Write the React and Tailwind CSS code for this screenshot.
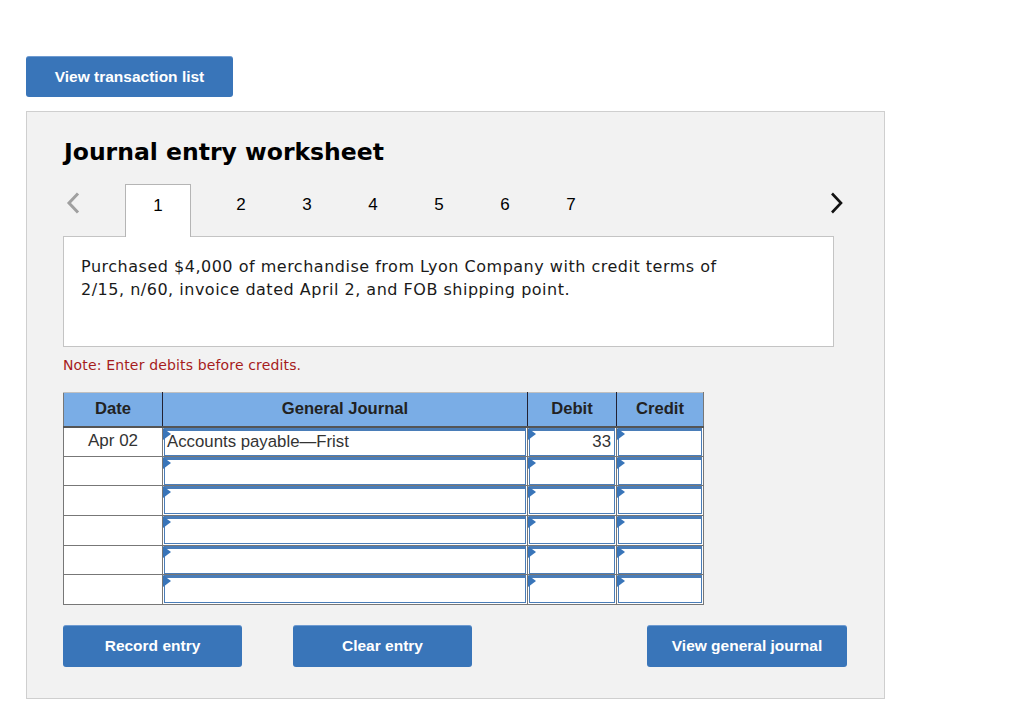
const rows = [
  { date: "Apr 02", account: "Accounts payable—Frist", debit: "33", credit: "" },
  { date: "", account: "", debit: "", credit: "" },
  { date: "", account: "", debit: "", credit: "" },
  { date: "", account: "", debit: "", credit: "" },
  { date: "", account: "", debit: "", credit: "" },
  { date: "", account: "", debit: "", credit: "" },
];

function Button({ children, className }) {
  return (
    <button className={"rounded-[3px] border-t border-[#6f9bd1] bg-[#3975b9] text-center text-[15.5px] font-bold text-white " + className}>
      {children}
    </button>
  );
}

function InputCell({ children, right }) {
  return (
    <td className="relative border-l border-[#777] p-0 align-top">
      <span className="absolute left-0 top-0 h-0 w-0 border-y-[6px] border-l-[8px] border-y-transparent border-l-[#3975b9]" />
      <div className={"ml-px mr-[1px] flex h-[28px] items-center border border-t-[3px] border-[#4a7db8] bg-white text-[16.8px] leading-none text-[#333] " + (right ? "justify-end pr-[3px]" : "pl-[2px]")}>
        {children}
      </div>
    </td>
  );
}

export default function App() {
  return (
    <div className="h-[721px] w-[1024px] overflow-hidden bg-white pl-[26px] pt-[56px] font-['Liberation_Sans',Arial,sans-serif]">
      <Button className="h-[41px] w-[207px]">View transaction list</Button>

      <div className="mt-[14px] h-[588px] w-[859px] border border-[#cfcfcf] bg-[#f2f2f2] pl-[36px] pt-[25px]">
        <h1 className="pl-px font-['DejaVu_Sans',Verdana,sans-serif] text-[23.5px] font-bold leading-[30px] text-black">
          Journal entry worksheet
        </h1>

        <div className="relative mt-[17px] flex h-[53px] w-[771px] items-start">
          <svg className="absolute left-[3px] top-[8px]" width="14" height="22" viewBox="0 0 14 22" fill="none" stroke="#a0a0a0" strokeWidth="3">
            <path d="M12 1.5 3 11l9 9.5" />
          </svg>
          <div className="z-10 ml-[62px] mr-[17px] flex h-[53px] w-[66px] justify-center border border-b-0 border-[#b5b5b5] bg-white pt-[11px] text-[17px] leading-[20px] text-black">
            1
          </div>
          {[2, 3, 4, 5, 6, 7].map((n) => (
            <div key={n} className="flex h-[53px] w-[66px] justify-center pt-[11px] text-[17px] leading-[20px] text-black">
              {n}
            </div>
          ))}
          <svg className="absolute left-[767px] top-[8px]" width="14" height="22" viewBox="0 0 14 22" fill="none" stroke="#111" strokeWidth="2.6">
            <path d="M2 1.5 11 11l-9 9.5" />
          </svg>
        </div>

        <div className="-mt-px h-[111px] w-[771px] border border-[#c4c4c4] bg-white px-[17px] pt-[18px] font-['DejaVu_Sans',Verdana,sans-serif] text-[16px] leading-[23px] tracking-[0.51px] text-[#1a1a1a]">
          <p className="w-[680px]">
            Purchased $4,000 of merchandise from Lyon Company with credit terms of 2/15, n/60, invoice dated April 2, and FOB shipping point.
          </p>
        </div>

        <p className="mt-[9px] font-['DejaVu_Sans',Verdana,sans-serif] text-[14px] leading-[18px] tracking-[0.15px] text-[#a61c1c]">
          Note: Enter debits before credits.
        </p>

        <table className="mt-[18px] w-[640px] table-fixed border-collapse border border-[#777] border-t-[#c0c0c0] bg-white">
          <colgroup>
            <col className="w-[99px]" />
            <col className="w-[365px]" />
            <col className="w-[89px]" />
            <col className="w-[87px]" />
          </colgroup>
          <thead>
            <tr className="h-[34px] border-b-2 border-[#555] bg-[#7aade6] text-[16.6px] font-bold text-[#222]">
              <th className="p-0 font-bold">Date</th>
              <th className="border-l border-[#223] p-0 font-bold">General Journal</th>
              <th className="border-l border-[#223] p-0 font-bold">Debit</th>
              <th className="border-l border-[#223] p-0 font-bold">Credit</th>
            </tr>
          </thead>
          <tbody>
            {rows.map((row, i) => (
              <tr key={i} className="h-[29.7px] border-t border-[#777]">
                <td className="p-0 pb-[2px] text-center text-[17px] text-[#333]">{row.date}</td>
                <InputCell>{row.account}</InputCell>
                <InputCell right>{row.debit}</InputCell>
                <InputCell>{row.credit}</InputCell>
              </tr>
            ))}
          </tbody>
        </table>

        <div className="mt-[20px] flex w-[784px]">
          <Button className="h-[42px] w-[179px] pb-[2px]">Record entry</Button>
          <Button className="ml-[51px] h-[42px] w-[179px] pb-[2px]">Clear entry</Button>
          <Button className="ml-auto h-[42px] w-[200px] pb-[2px]">View general journal</Button>
        </div>
      </div>
    </div>
  );
}
